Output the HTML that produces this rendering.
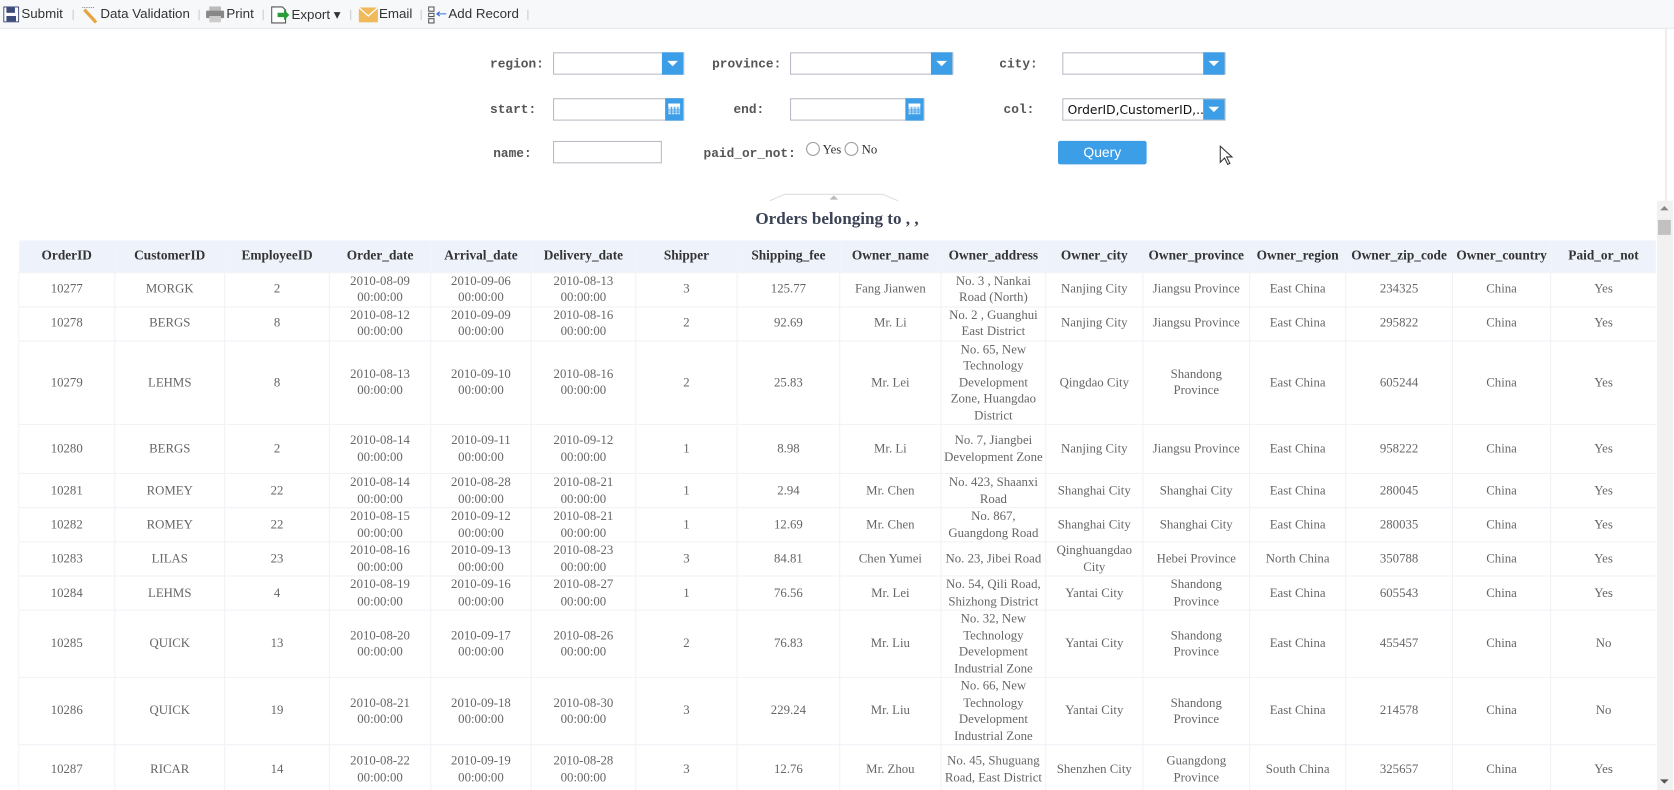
<!DOCTYPE html>
<html><head><meta charset="utf-8"><style>
*{margin:0;padding:0;box-sizing:border-box}
body{width:1674px;height:790px;overflow:hidden;background:#fff;font-family:"Liberation Serif",serif;position:relative}
#f{position:absolute;left:0;top:0;width:1568px;height:740px;transform:scale(1.0676);transform-origin:0 0;overflow:hidden}
.tb{position:absolute;left:0;top:0;width:1568px;height:27px;background:#f7f8fa;border-bottom:1px solid #e6e8ec;font-family:"Liberation Sans",sans-serif;font-size:12.5px;color:#333}
.tb span{position:absolute;top:6px}
.sep{position:absolute;top:9px;width:1px;height:10px;background:#ccc}
.lbl{position:absolute;font-family:"Liberation Mono",monospace;font-size:12px;font-weight:bold;color:#555}
.in{position:absolute;height:21px;border:1px solid #b8bcc6;background:#fff}
.btn{position:absolute;width:20px;height:21px;background:#3d9ee8}
.tri{position:absolute;left:5px;top:8px;border-left:5px solid transparent;border-right:5px solid transparent;border-top:5px solid #fff}
.wrap{position:absolute;left:17px;top:225px;width:1534px;height:515px;overflow:hidden}
table{border-collapse:collapse;table-layout:fixed;width:1534px;font-size:12px;line-height:15.5px}
th{background:#eef3fb;color:#333;font-weight:bold;height:30px;text-align:center;font-size:12.5px;white-space:nowrap}
td{color:#666;text-align:center;border:1px solid #f0f2f6;padding:0 1px}
</style></head><body><div id="f">
<div class="tb">
<svg style="position:absolute;left:3px;top:6px" width="15" height="15"><rect x=".5" y=".5" width="14" height="14" fill="#fff" stroke="#3c4b7a"/><rect x="3" y="1" width="8" height="5" fill="#3c4b7a"/><rect x="3" y="9" width="9" height="5" fill="#3c4b7a"/></svg>
<span style="left:20px">Submit</span><i class="sep" style="left:68px"></i>
<svg style="position:absolute;left:76px;top:5px" width="16" height="17"><line x1="3" y1="4" x2="14" y2="16" stroke="#e8a43c" stroke-width="3"/><line x1="1" y1="2" x2="12" y2="2" stroke="#888" stroke-width="1" stroke-dasharray="1,1"/></svg>
<span style="left:94px">Data Validation</span><i class="sep" style="left:186px"></i>
<svg style="position:absolute;left:193px;top:6px" width="17" height="15"><rect x="3" y="0" width="11" height="4" fill="#bbb"/><rect x="0" y="4" width="17" height="7" rx="1" fill="#888"/><rect x="3" y="9" width="11" height="6" fill="#ccc"/></svg>
<span style="left:212px">Print</span><i class="sep" style="left:246px"></i>
<svg style="position:absolute;left:253px;top:5px" width="18" height="18"><path d="M1.5 1.5h10l3 3v12h-13z" fill="#fff" stroke="#555"/><path d="M7 7h6V4l5 5-5 5v-3H7z" fill="#2a9d3a"/></svg>
<span style="left:273px">Export ▾</span><i class="sep" style="left:328px"></i>
<svg style="position:absolute;left:336px;top:7px" width="18" height="14"><rect width="18" height="14" fill="#f0b95a"/><path d="M0 0l9 8 9-8" fill="none" stroke="#fff" stroke-width="1.2"/></svg>
<span style="left:355px">Email</span><i class="sep" style="left:394px"></i>
<svg style="position:absolute;left:401px;top:6px" width="18" height="16"><rect x=".5" y=".5" width="5" height="4" fill="none" stroke="#555"/><rect x=".5" y="6.5" width="5" height="3" fill="none" stroke="#555"/><rect x=".5" y="11.5" width="5" height="4" fill="none" stroke="#555"/><path d="M8 7h9M8 7l3-2M8 7l3 2" stroke="#3a6fd8" fill="none"/></svg>
<span style="left:420px">Add Record</span><i class="sep" style="left:494px"></i>
</div>
<div style="position:absolute;left:1560px;top:27px;width:1px;height:165px;background:#ddd"></div>

<div class="lbl" style="left:459px;top:53px">region:</div>
<div class="in" style="left:518px;top:49px;width:123px"><div class="btn" style="right:0;top:-1px"><i class="tri"></i></div></div>
<div class="lbl" style="left:667px;top:53px">province:</div>
<div class="in" style="left:740px;top:49px;width:153px"><div class="btn" style="right:0;top:-1px"><i class="tri"></i></div></div>
<div class="lbl" style="left:936px;top:53px">city:</div>
<div class="in" style="left:995px;top:49px;width:153px"><div class="btn" style="right:0;top:-1px"><i class="tri"></i></div></div>

<div class="lbl" style="left:459px;top:96px">start:</div>
<div class="in" style="left:518px;top:92px;width:123px"><div class="btn" style="right:0;top:-1px;width:17px"><svg width="17" height="21"><rect x="3" y="5" width="11" height="10" fill="#cfe6fa"/><rect x="3" y="5" width="11" height="3" fill="#fff"/><path d="M3 11h11M3 13h11M6 8v7M9 8v7M12 8v7" stroke="#3d9ee8" stroke-width=".8"/></svg></div></div>
<div class="lbl" style="left:687px;top:96px">end:</div>
<div class="in" style="left:740px;top:92px;width:126px"><div class="btn" style="right:0;top:-1px;width:17px"><svg width="17" height="21"><rect x="3" y="5" width="11" height="10" fill="#cfe6fa"/><rect x="3" y="5" width="11" height="3" fill="#fff"/><path d="M3 11h11M3 13h11M6 8v7M9 8v7M12 8v7" stroke="#3d9ee8" stroke-width=".8"/></svg></div></div>
<div class="lbl" style="left:940px;top:96px">col:</div>
<div class="in" style="left:995px;top:92px;width:153px;font-family:'DejaVu Sans',sans-serif;font-size:11.5px;color:#111;padding:3px 0 0 4px;white-space:nowrap;overflow:hidden">OrderID,CustomerID,...<div class="btn" style="right:0;top:-1px"><i class="tri"></i></div></div>

<div class="lbl" style="left:462px;top:137px">name:</div>
<div class="in" style="left:518px;top:132px;width:102px"></div>
<div class="lbl" style="left:659px;top:137px">paid_or_not:</div>
<div style="position:absolute;left:755px;top:133px;font-size:12px;color:#333"><span style="display:inline-block;width:13px;height:13px;border:1px solid #999;border-radius:50%;vertical-align:-2px"></span> Yes <span style="display:inline-block;width:13px;height:13px;border:1px solid #999;border-radius:50%;vertical-align:-2px"></span> No</div>
<div style="position:absolute;left:991px;top:132px;width:83px;height:22px;background:#3d9ee8;border-radius:2px;color:#fff;font-family:'Liberation Sans',sans-serif;font-size:13px;text-align:center;line-height:21px">Query</div>
<svg style="position:absolute;left:1142px;top:136px" width="14" height="20"><path d="M1 1v15l4-4 3 6 2-1-3-6h5z" fill="#fff" stroke="#333"/></svg>

<svg style="position:absolute;left:720px;top:181px" width="122" height="8"><path d="M1 7L15 1h92l14 6" fill="none" stroke="#ddd"/><path d="M57 6l4-4 4 4z" fill="#bbb"/></svg>
<div style="position:absolute;left:0;width:1568px;top:197px;text-align:center;font-size:16px;font-weight:bold;color:#3a4256">Orders belonging to , ,</div>

<div style="position:absolute;left:1552px;top:188px;width:15px;height:552px;background:#f1f1f1"></div>
<div style="position:absolute;left:1553px;top:206px;width:12px;height:14px;background:#c1c1c1"></div>
<div style="position:absolute;left:1555px;top:193px;border-left:4px solid transparent;border-right:4px solid transparent;border-bottom:4px solid #888"></div>
<div style="position:absolute;left:1555px;top:730px;border-left:4px solid transparent;border-right:4px solid transparent;border-top:4px solid #555"></div>

<div class="wrap"><table>
<colgroup><col style="width:90px"><col style="width:103px"><col style="width:98px"><col style="width:95px"><col style="width:94px"><col style="width:98px"><col style="width:95px"><col style="width:96px"><col style="width:95px"><col style="width:98px"><col style="width:91px"><col style="width:100px"><col style="width:90px"><col style="width:100px"><col style="width:92px"><col style="width:99px"></colgroup>
<tr><th>OrderID</th><th>CustomerID</th><th>EmployeeID</th><th>Order_date</th><th>Arrival_date</th><th>Delivery_date</th><th>Shipper</th><th>Shipping_fee</th><th>Owner_name</th><th>Owner_address</th><th>Owner_city</th><th>Owner_province</th><th>Owner_region</th><th>Owner_zip_code</th><th>Owner_country</th><th>Paid_or_not</th></tr>
<tr style="height:31px"><td>10277</td><td>MORGK</td><td>2</td><td>2010-08-09 00:00:00</td><td>2010-09-06 00:00:00</td><td>2010-08-13 00:00:00</td><td>3</td><td>125.77</td><td>Fang Jianwen</td><td>No. 3 , Nankai Road (North)</td><td>Nanjing City</td><td>Jiangsu Province</td><td>East China</td><td>234325</td><td>China</td><td>Yes</td></tr>
<tr style="height:31px"><td>10278</td><td>BERGS</td><td>8</td><td>2010-08-12 00:00:00</td><td>2010-09-09 00:00:00</td><td>2010-08-16 00:00:00</td><td>2</td><td>92.69</td><td>Mr. Li</td><td>No. 2 , Guanghui East District</td><td>Nanjing City</td><td>Jiangsu Province</td><td>East China</td><td>295822</td><td>China</td><td>Yes</td></tr>
<tr style="height:78px"><td>10279</td><td>LEHMS</td><td>8</td><td>2010-08-13 00:00:00</td><td>2010-09-10 00:00:00</td><td>2010-08-16 00:00:00</td><td>2</td><td>25.83</td><td>Mr. Lei</td><td>No. 65, New Technology Development Zone, Huangdao District</td><td>Qingdao City</td><td>Shandong<br>Province</td><td>East China</td><td>605244</td><td>China</td><td>Yes</td></tr>
<tr style="height:46px"><td>10280</td><td>BERGS</td><td>2</td><td>2010-08-14 00:00:00</td><td>2010-09-11 00:00:00</td><td>2010-09-12 00:00:00</td><td>1</td><td>8.98</td><td>Mr. Li</td><td>No. 7, Jiangbei Development Zone</td><td>Nanjing City</td><td>Jiangsu Province</td><td>East China</td><td>958222</td><td>China</td><td>Yes</td></tr>
<tr style="height:31px"><td>10281</td><td>ROMEY</td><td>22</td><td>2010-08-14 00:00:00</td><td>2010-08-28 00:00:00</td><td>2010-08-21 00:00:00</td><td>1</td><td>2.94</td><td>Mr. Chen</td><td>No. 423, Shaanxi Road</td><td>Shanghai City</td><td>Shanghai City</td><td>East China</td><td>280045</td><td>China</td><td>Yes</td></tr>
<tr style="height:31px"><td>10282</td><td>ROMEY</td><td>22</td><td>2010-08-15 00:00:00</td><td>2010-09-12 00:00:00</td><td>2010-08-21 00:00:00</td><td>1</td><td>12.69</td><td>Mr. Chen</td><td>No. 867, Guangdong Road</td><td>Shanghai City</td><td>Shanghai City</td><td>East China</td><td>280035</td><td>China</td><td>Yes</td></tr>
<tr style="height:31px"><td>10283</td><td>LILAS</td><td>23</td><td>2010-08-16 00:00:00</td><td>2010-09-13 00:00:00</td><td>2010-08-23 00:00:00</td><td>3</td><td>84.81</td><td>Chen Yumei</td><td style="white-space:nowrap">No. 23, Jibei Road</td><td>Qinghuangdao City</td><td>Hebei Province</td><td>North China</td><td>350788</td><td>China</td><td>Yes</td></tr>
<tr style="height:31px"><td>10284</td><td>LEHMS</td><td>4</td><td>2010-08-19 00:00:00</td><td>2010-09-16 00:00:00</td><td>2010-08-27 00:00:00</td><td>1</td><td>76.56</td><td>Mr. Lei</td><td>No. 54, Qili Road,<br>Shizhong District</td><td>Yantai City</td><td>Shandong<br>Province</td><td>East China</td><td>605543</td><td>China</td><td>Yes</td></tr>
<tr style="height:62px"><td>10285</td><td>QUICK</td><td>13</td><td>2010-08-20 00:00:00</td><td>2010-09-17 00:00:00</td><td>2010-08-26 00:00:00</td><td>2</td><td>76.83</td><td>Mr. Liu</td><td>No. 32, New Technology Development Industrial Zone</td><td>Yantai City</td><td>Shandong<br>Province</td><td>East China</td><td>455457</td><td>China</td><td>No</td></tr>
<tr style="height:62px"><td>10286</td><td>QUICK</td><td>19</td><td>2010-08-21 00:00:00</td><td>2010-09-18 00:00:00</td><td>2010-08-30 00:00:00</td><td>3</td><td>229.24</td><td>Mr. Liu</td><td>No. 66, New Technology Development Industrial Zone</td><td>Yantai City</td><td>Shandong<br>Province</td><td>East China</td><td>214578</td><td>China</td><td>No</td></tr>
<tr style="height:46px"><td>10287</td><td>RICAR</td><td>14</td><td>2010-08-22 00:00:00</td><td>2010-09-19 00:00:00</td><td>2010-08-28 00:00:00</td><td>3</td><td>12.76</td><td>Mr. Zhou</td><td>No. 45, Shuguang Road, East District</td><td>Shenzhen City</td><td>Guangdong<br>Province</td><td>South China</td><td>325657</td><td>China</td><td>Yes</td></tr>
<tr style="height:46px"><td></td><td></td><td></td><td></td><td></td><td></td><td></td><td></td><td></td><td>No. 12, Jin</td><td></td><td></td><td></td><td></td><td></td><td></td></tr>
</table></div>
</div></body></html>
